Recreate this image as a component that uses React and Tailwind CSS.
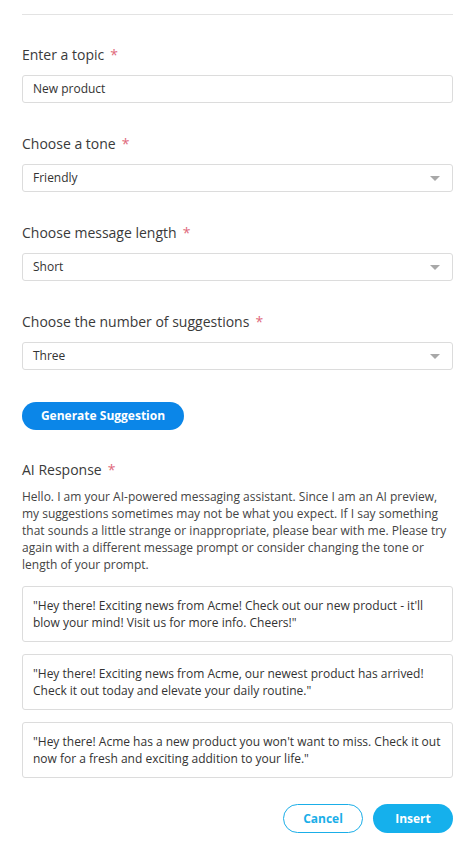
const font = { fontFamily: '"Open Sans", "Noto Sans", sans-serif' }

function Label({ children }) {
  return (
    <div className="text-[14px] leading-[20px] text-[#3a3a3a] mb-[10px]">
      {children}
      <span className="text-[#e0697c] ml-[6px]">*</span>
    </div>
  )
}

function SelectBox({ value }) {
  return (
    <div className="h-[28px] border border-[#dcdcdc] rounded-[3px] bg-white flex items-center justify-between pl-[10px] pr-[12px] text-[12px] text-[#333]">
      <span>{value}</span>
      <svg width="10" height="5" viewBox="0 0 10 5">
        <path d="M0 0 L10 0 L5 5 Z" fill="#a8a8a8" />
      </svg>
    </div>
  )
}

const suggestions = [
  '"Hey there! Exciting news from Acme! Check out our new product - it\'ll blow your mind! Visit us for more info. Cheers!"',
  '"Hey there! Exciting news from Acme, our newest product has arrived! Check it out today and elevate your daily routine."',
  '"Hey there! Acme has a new product you won\'t want to miss. Check it out now for a fresh and exciting addition to your life."',
]

export default function App() {
  return (
    <div className="bg-white min-h-[844px] pl-[22px] pr-[20px] pt-[14px]" style={font}>
      <div className="border-t border-[#e3e3e3]" />

      <div className="mt-[30px]">
        <Label>Enter a topic</Label>
        <div className="h-[28px] border border-[#dcdcdc] rounded-[3px] flex items-center pl-[10px] text-[12px] text-[#333]">
          New product
        </div>
      </div>

      <div className="mt-[31px]">
        <Label>Choose a tone</Label>
        <SelectBox value="Friendly" />
      </div>

      <div className="mt-[31px]">
        <Label>Choose message length</Label>
        <SelectBox value="Short" />
      </div>

      <div className="mt-[31px]">
        <Label>Choose the number of suggestions</Label>
        <SelectBox value="Three" />
      </div>

      <button className="mt-[32px] h-[28px] w-[162px] rounded-full bg-[#0b86e8] text-white text-[12px] font-bold">
        Generate Suggestion
      </button>

      <div className="mt-[30px]">
        <div className="text-[14px] leading-[20px] text-[#3a3a3a]">
          AI Response<span className="text-[#e0697c] ml-[6px]">*</span>
        </div>
        <p className="mt-[8px] pr-[4px] text-[12px] leading-[17px] text-[#444]">
          Hello. I am your AI-powered messaging assistant. Since I am an AI preview, my suggestions sometimes may not be what you expect. If I say something that sounds a little strange or inappropriate, please bear with me. Please try again with a different message prompt or consider changing the tone or length of your prompt.
        </p>
        <div className="mt-[13px] flex flex-col gap-[12px]">
          {suggestions.map((s, i) => (
            <div key={i} className="border border-[#dcdcdc] rounded-[3px] pl-[10px] pr-[4px] py-[10px] text-[12px] leading-[17px] text-[#333]">
              {s}
            </div>
          ))}
        </div>
      </div>

      <div className="mt-[26px] flex justify-end gap-[10px]">
        <button className="h-[29px] w-[80px] rounded-full border border-[#1aaee8] text-[#1aaee8] text-[12px] font-bold bg-white">
          Cancel
        </button>
        <button className="h-[29px] w-[80px] rounded-full bg-[#15b0ec] text-white text-[12px] font-bold">
          Insert
        </button>
      </div>
    </div>
  )
}
